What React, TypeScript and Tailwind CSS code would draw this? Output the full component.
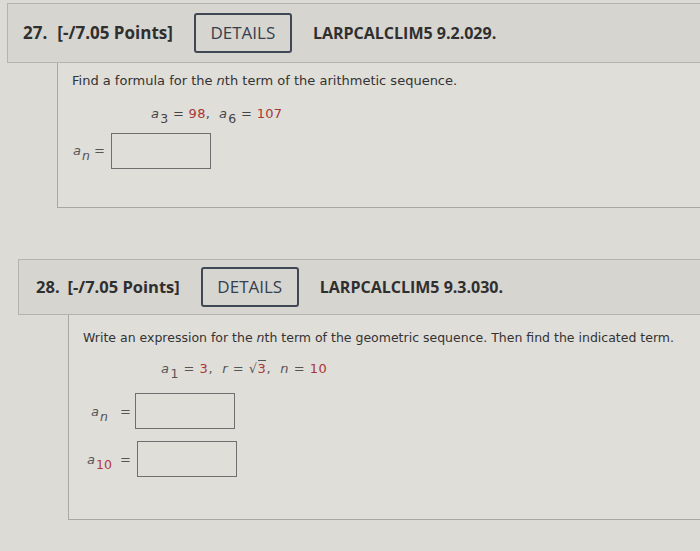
import React from "react";

const body = { fontFamily: '"DejaVu Sans", Verdana, sans-serif' };
const head = { fontFamily: '"Open Sans", "Liberation Sans", sans-serif' };

function Header({ num, code, size, gap }: { num: string; code: string; size: number; gap: number }) {
  return (
    <div className="flex items-center h-full text-[#2f2f2f]" style={head}>
      <span className="font-bold whitespace-nowrap" style={{ fontSize: size }}>
        {num}.<span style={{ marginLeft: gap }}>[-/7.05 Points]</span>
      </span>
      <div className="ml-[21px] flex items-center justify-center w-[98px] h-[40px] border-2 border-[#3f4854] rounded-[3px] text-[17px] text-[#34404f]">
        DETAILS
      </div>
      <span className="ml-[21px] font-bold text-[16px] whitespace-nowrap">{code}</span>
    </div>
  );
}

function A({ sub, red, italic }: { sub: string; red?: boolean; italic?: boolean }) {
  return (
    <span className="whitespace-nowrap">
      <i>a</i>
      <sub className={`text-[12.5px] relative top-[5px] ml-[1px] ${red ? "text-[#b03a3a]" : ""} ${italic ? "italic" : ""}`}>{sub}</sub>
    </span>
  );
}

function Box() {
  return <div className="w-[100px] h-[36px] border border-[#6f6f6f]" />;
}

export default function App() {
  return (
    <div className="w-[700px] h-[551px] overflow-hidden bg-[#dddbd6] text-[#333]">
      {/* Question 27 */}
      <div className="pt-[3px] pl-[7px]">
        <div className="h-[60px] border-y border-l border-[#b5b3ae] bg-[#d7d5d0] pl-[15px]">
          <Header num="27" code="LARPCALCLIM5 9.2.029." size={17} gap={10} />
        </div>
        <div className="ml-[50px] h-[145px] border-l border-b border-[#aaa8a3] bg-[#e0ded9] pl-[14px] pt-[8px] text-[13px]" style={body}>
          <p>
            Find a formula for the <i>n</i>th term of the arithmetic sequence.
          </p>
          <p className="mt-[13px] pl-[79px] text-[#444] tracking-[0.3px]">
            <A sub="3" /> = <span className="text-[#a83636]">98</span>,&nbsp; <A sub="6" /> ={" "}
            <span className="text-[#a83636]">107</span>
          </p>
          <div className="mt-[10px] flex items-center">
            <span className="w-[39px] pl-[1px] text-[#555]">
              <A sub="n" italic /> =
            </span>
            <Box />
          </div>
        </div>
      </div>

      {/* Question 28 */}
      <div className="mt-[51px] pl-[18px]">
        <div className="h-[56px] border-y border-l border-[#b5b3ae] bg-[#d7d5d0] pl-[17px]">
          <Header num="28" code="LARPCALCLIM5 9.3.030." size={16.5} gap={8} />
        </div>
        <div className="ml-[50px] h-[205px] border-l border-b border-[#aaa8a3] bg-[#e0ded9] pl-[14px] pt-[14px] text-[12.5px]" style={body}>
          <p>
            Write an expression for the <i>n</i>th term of the geometric sequence. Then find the indicated term.
          </p>
          <p className="mt-[11px] pl-[78px] text-[#555] text-[13px] tracking-[0.5px]">
            <A sub="1" /> = <span className="text-[#a83636]">3</span>,&nbsp; <i>r</i> ={" "}
            <span className="whitespace-nowrap">
              √<span className="border-t border-[#555] text-[#a83636]">3</span>
            </span>
            ,&nbsp; <i>n</i> = <span className="text-[#a83636]">10</span>
          </p>
          <div className="mt-[15px] flex items-center text-[13px]">
            <span className="w-[52px] pl-[8px] text-[#555]">
              <A sub="n" italic /> <span className="ml-[8px]">=</span>
            </span>
            <Box />
          </div>
          <div className="mt-[12px] flex items-center text-[13px]">
            <span className="w-[54px] pl-[4px] text-[#555]">
              <A sub="10" red /> <span className="ml-[4px]">=</span>
            </span>
            <Box />
          </div>
        </div>
      </div>
    </div>
  );
}
